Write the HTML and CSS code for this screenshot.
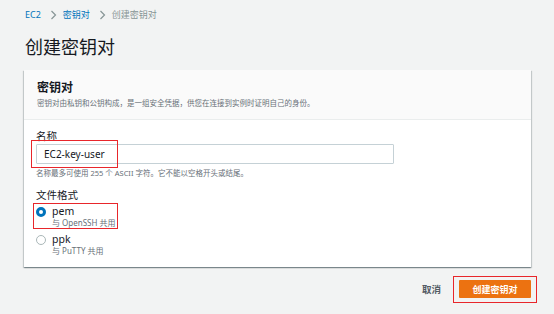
FILE: index.html
```html
<!DOCTYPE html>
<html lang="zh-CN">
<head>
  <meta charset="UTF-8" />
  <title>创建密钥对</title>
  <link rel="stylesheet" href="styles.css">
</head>
<body>
  <div class="page">

    <div class="breadcrumb">
      <a href="#">EC2</a>
      <span class="sep">
        <svg width="7" height="10" viewBox="0 0 7 10"><path d="M1.5 1 L5.5 5 L1.5 9" fill="none" stroke="#879596" stroke-width="1.2"/></svg>
      </span>
      <a href="#">密钥对</a>
      <span class="sep">
        <svg width="7" height="10" viewBox="0 0 7 10"><path d="M1.5 1 L5.5 5 L1.5 9" fill="none" stroke="#879596" stroke-width="1.2"/></svg>
      </span>
      <span class="current">创建密钥对</span>
    </div>

    <h1>创建密钥对</h1>

    <div class="card">
      <div class="card-header">
        <h2>密钥对</h2>
        <p>密钥对由私钥和公钥构成，是一组安全凭据，供您在连接到实例时证明自己的身份。</p>
      </div>
      <div class="card-body">
        <label class="field-label">名称</label>
        <input class="text-input" type="text" value="EC2-key-user" />
        <div class="hint">名称最多可使用 255 个 ASCII 字符。它不能以空格开头或结尾。</div>

        <label class="field-label format-label">文件格式</label>
        <div class="radio-row">
          <span class="radio checked"></span>
          <div>
            <div class="radio-title">pem</div>
            <div class="radio-sub">与 OpenSSH 共用</div>
          </div>
        </div>
        <div class="radio-row second">
          <span class="radio"></span>
          <div>
            <div class="radio-title">ppk</div>
            <div class="radio-sub">与 PuTTY 共用</div>
          </div>
        </div>
      </div>
    </div>

    <div class="actions">
      <button class="btn-link">取消</button>
      <button class="btn-primary">创建密钥对</button>
    </div>

    <!-- annotation boxes -->
    <div class="mark mark-name"></div>
    <div class="mark mark-pem"></div>
    <div class="mark mark-btn"></div>
  </div>
</body>
</html>
```

FILE: styles.css
```css
:root {
  --blue: #0073bb;
  --orange: #ec7211;
  --text: #16191f;
  --muted: #687078;
  --border: #c5d1d6;
}

body {
  margin: 0;
  background: #f2f3f3;
  font-family: "Noto Sans", "Noto Sans CJK SC", sans-serif;
  color: var(--text);
}

.page {
  position: relative;
  padding: 0 23px 0 24px;
  height: 314px;
  box-sizing: border-box;
}

.breadcrumb {
  display: flex;
  align-items: center;
  padding-top: 9px;
  height: 12px;
  line-height: 12px;
  font-size: 9px;
  padding-left: 1px;
}

.breadcrumb a {
  color: var(--blue);
  text-decoration: none;
}

.breadcrumb .sep {
  display: flex;
  margin: 0 6px 0 9px;
}

.breadcrumb .current {
  color: #879596;
}

h1 {
  margin: 14px 0 0 1px;
  font-size: 18px;
  font-weight: 400;
  line-height: 24px;
}

.card {
  margin-top: 11px;
  background: #fff;
  box-shadow: 0 1px 1px 0 rgba(0, 28, 36, 0.3), 1px 1px 1px 0 rgba(0, 28, 36, 0.15), -1px 1px 1px 0 rgba(0, 28, 36, 0.15);
}

.card-header {
  background: #fafafa;
  border-bottom: 1px solid #eaeded;
  height: 39px;
  padding: 10px 13px 0;
}

.card-header h2 {
  margin: 0;
  font-size: 12px;
  line-height: 16px;
  font-weight: 700;
}

.card-header p {
  margin: 1px 0 0;
  font-size: 7.5px;
  line-height: 12px;
  color: var(--muted);
}

.card-body {
  padding: 9px 13px 11px 12px;
}

.field-label {
  display: block;
  font-size: 10.5px;
  line-height: 14px;
  margin-bottom: 1px;
}

.text-input {
  display: block;
  box-sizing: border-box;
  width: 358px;
  height: 20px;
  border: 1px solid var(--border);
  border-radius: 1px;
  padding: 0 7px;
  font-family: inherit;
  font-size: 10px;
  color: var(--text);
}

.hint {
  margin-top: 3px;
  font-size: 7.5px;
  line-height: 12px;
  color: var(--muted);
}

.format-label {
  margin-top: 9px;
  margin-bottom: 3px;
}

.radio-row {
  display: flex;
  align-items: flex-start;
  gap: 6px;
}

.radio-row.second {
  margin-top: 5px;
}

.radio {
  box-sizing: border-box;
  width: 10px;
  height: 10px;
  margin-top: 2px;
  border-radius: 50%;
  border: 1px solid #aab7b8;
  background: #fff;
  flex: none;
}

.radio.checked {
  border: 3px solid var(--blue);
}

.radio-title {
  font-size: 10.5px;
  line-height: 12px;
}

.radio-sub {
  font-size: 8px;
  line-height: 11px;
  color: var(--muted);
}

.actions {
  display: flex;
  justify-content: flex-end;
  align-items: center;
  gap: 18px;
  margin-top: 13px;
}

.btn-link {
  background: none;
  border: none;
  padding: 0;
  font-family: inherit;
  font-size: 9.5px;
  font-weight: 700;
  color: #545b64;
}

.btn-primary {
  width: 72px;
  height: 18px;
  background: var(--orange);
  border: none;
  border-radius: 1px;
  color: #fff;
  font-family: inherit;
  font-size: 9px;
  font-weight: 700;
  padding: 0;
}

.mark {
  position: absolute;
  border: 1.5px solid #e8262b;
  box-sizing: border-box;
}

.mark-name {
  left: 31px;
  top: 140px;
  width: 87px;
  height: 28px;
}

.mark-pem {
  left: 33px;
  top: 203px;
  width: 85px;
  height: 26px;
}

.mark-btn {
  left: 453px;
  top: 276px;
  width: 84px;
  height: 27px;
}
```
